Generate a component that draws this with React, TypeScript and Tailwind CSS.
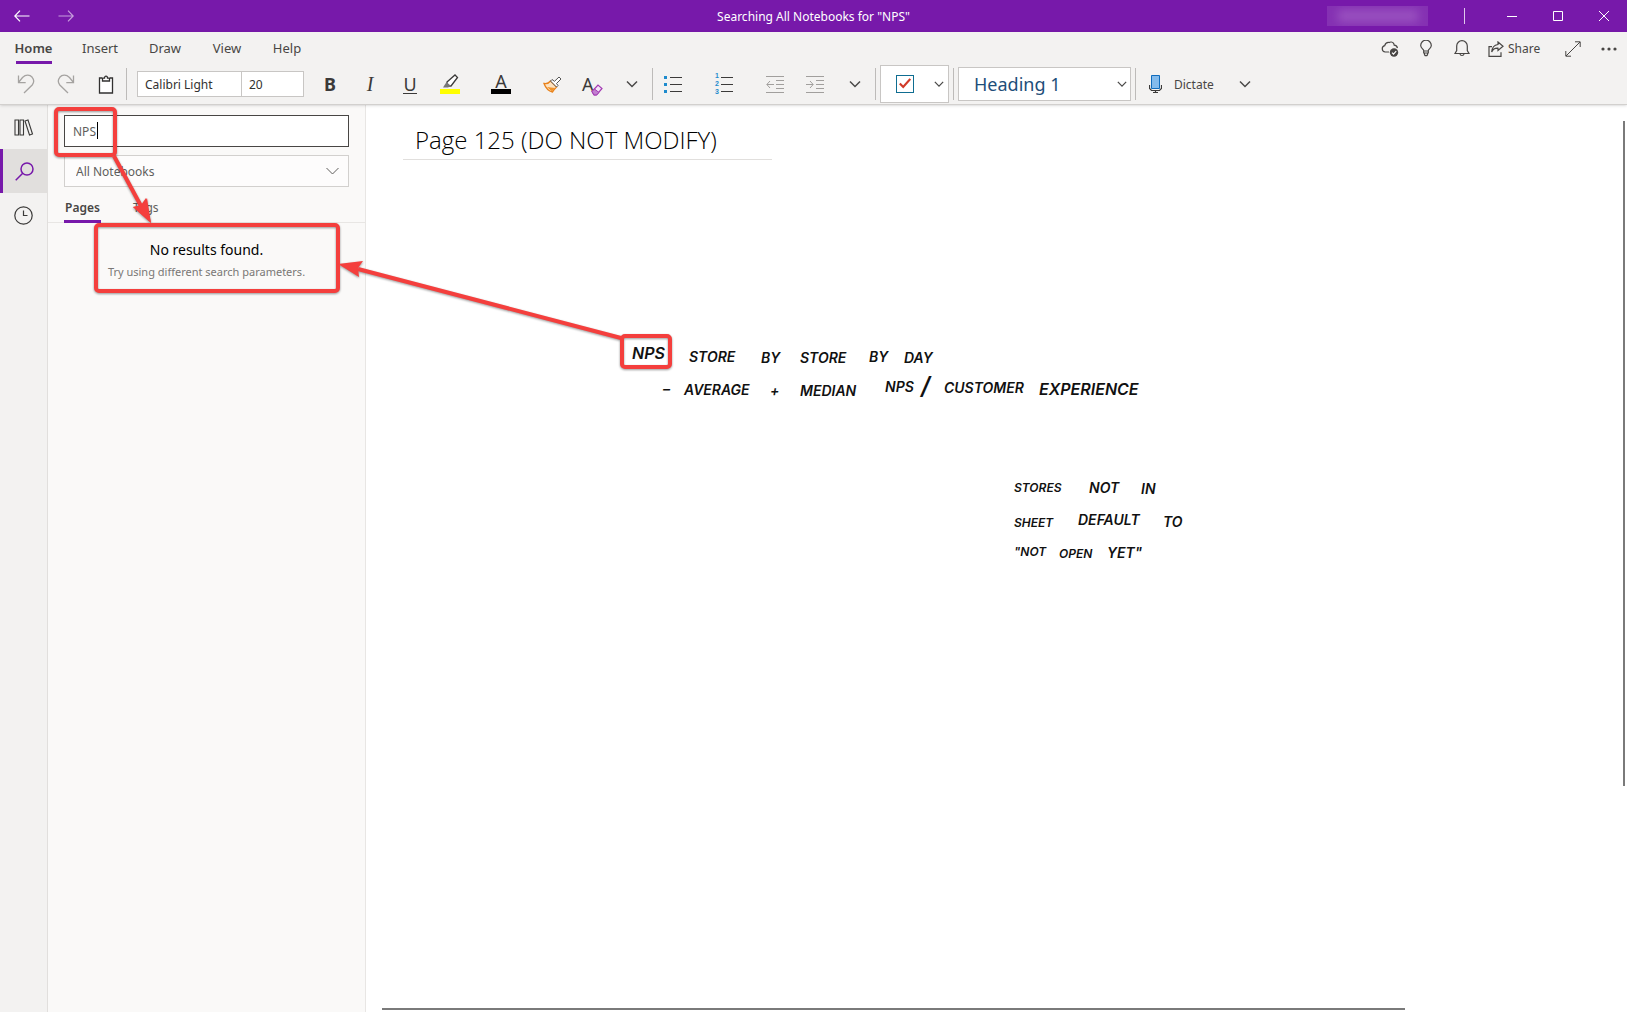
import type { ReactNode } from "react"

const menuTabs = [
  { label: "Insert", width: "w-[66px]" },
  { label: "Draw", width: "w-[64px]" },
  { label: "View", width: "w-[60px]" },
  { label: "Help", width: "w-[60px]" },
]

// Ink words on the page canvas, x / y of the left edge and the vertical centre
const inkWords = [
  { text: "NPS", x: 266, y: 248, size: "text-base" },
  { text: "STORE", x: 323, y: 252, size: "text-sm" },
  { text: "BY", x: 395, y: 253, size: "text-sm" },
  { text: "STORE", x: 434, y: 253, size: "text-sm" },
  { text: "BY", x: 503, y: 252, size: "text-sm" },
  { text: "DAY", x: 538, y: 253, size: "text-sm" },
  { text: "–", x: 297, y: 284, size: "text-sm" },
  { text: "AVERAGE", x: 318, y: 285, size: "text-sm" },
  { text: "+", x: 404, y: 286, size: "text-sm" },
  { text: "MEDIAN", x: 434, y: 286, size: "text-sm" },
  { text: "NPS", x: 519, y: 282, size: "text-sm" },
  { text: "/", x: 555, y: 281, size: "text-2xl" },
  { text: "CUSTOMER", x: 578, y: 283, size: "text-sm" },
  { text: "EXPERIENCE", x: 673, y: 284, size: "text-base" },
  { text: "STORES", x: 648, y: 383, size: "text-xs" },
  { text: "NOT", x: 723, y: 383, size: "text-sm" },
  { text: "IN", x: 775, y: 384, size: "text-sm" },
  { text: "SHEET", x: 648, y: 418, size: "text-xs" },
  { text: "DEFAULT", x: 712, y: 415, size: "text-sm" },
  { text: "TO", x: 797, y: 417, size: "text-sm" },
  { text: "\"NOT", x: 648, y: 447, size: "text-xs" },
  { text: "OPEN", x: 693, y: 449, size: "text-xs" },
  { text: "YET\"", x: 741, y: 448, size: "text-sm" },
]

function ToolButton({ label, wide, children }: { label: string; wide?: boolean; children: ReactNode }) {
  return (
    <button
      aria-label={label}
      className={`flex h-8 shrink-0 items-center justify-center text-[#3b3a39] ${wide ? "w-[62px]" : "w-10"}`}
    >
      {children}
    </button>
  )
}

function Divider() {
  return <div className="h-8 w-px shrink-0 bg-[#bdbbb9]" />
}

function Chevron({ className = "" }: { className?: string }) {
  return (
    <svg width="12" height="12" viewBox="0 0 12 12" fill="none" stroke="#4a4948" strokeWidth="1.5" className={className}>
      <path d="M1 3.5l5 5 5-5" />
    </svg>
  )
}

function TitleBar() {
  return (
    <header className="relative flex h-8 shrink-0 items-center bg-[#7719aa] text-white">
      <button aria-label="Back" className="flex h-8 w-11 items-center justify-center">
        <svg width="16" height="12" viewBox="0 0 16 12" fill="none" stroke="currentColor" strokeWidth="1.2">
          <path d="M15.500 6H1M6 .7L.8 6 6 11.300" />
        </svg>
      </button>
      <button aria-label="Forward" className="flex h-8 w-11 items-center justify-center text-[#c79fdd]">
        <svg width="16" height="12" viewBox="0 0 16 12" fill="none" stroke="currentColor" strokeWidth="1.2">
          <path d="M.5 6H15M10 .7L15.200 6 10 11.300" />
        </svg>
      </button>
      <h1 className="pointer-events-none absolute inset-x-0 pt-px text-center text-xs">Searching All Notebooks for "NPS"</h1>
      <div className="ml-auto flex items-center">
        <div className="mr-9 flex h-5 w-[101px] items-center overflow-hidden bg-[#8531b3]">
          <div className="mx-auto h-3 w-20 bg-[#9a52c0] blur-[5px]" />
        </div>
        <div className="mr-6 h-4 w-px bg-[#e0c8ec]" />
        <button aria-label="Minimize" className="flex h-8 w-[46px] items-center justify-center">
          <svg width="10" height="10" stroke="currentColor"><path d="M0 5.500h10" /></svg>
        </button>
        <button aria-label="Maximize" className="flex h-8 w-[46px] items-center justify-center">
          <svg width="10" height="10" fill="none" stroke="currentColor"><path d="M.5.5h9v9h-9z" /></svg>
        </button>
        <button aria-label="Close" className="flex h-8 w-[46px] items-center justify-center">
          <svg width="10" height="10" stroke="currentColor"><path d="M0 0l10 10M10 0L0 10" /></svg>
        </button>
      </div>
    </header>
  )
}

function MenuRow() {
  return (
    <div className="flex h-8 items-center justify-between pr-2.5 text-[13px] text-[#484644]">
      <nav className="flex h-8">
        <button className="ml-[15px] mr-[15px] flex w-[37px] flex-col items-center justify-between pt-1.5 font-semibold">
          <span className="leading-5">Home</span>
          <span className="h-[3px] w-9 bg-[#7719aa]" />
        </button>
        {menuTabs.map((tab) => (
          <button key={tab.label} className={`h-8 pt-0.5 ${tab.width}`}>{tab.label}</button>
        ))}
      </nav>
      <div className="flex items-center pt-px">
        <button aria-label="Sync status" className="flex w-9 justify-center">
          <svg width="18" height="16" viewBox="0 0 18 16" fill="none" stroke="currentColor" strokeWidth="1.2">
            <path d="M8 11H4.200A3.200 3.200 0 013.700 4.700C4.300 2.500 6.200 1.200 8.200 1.500c1-.8 3.200-.7 4.200.6.5.7.7 1.300.8 2 1.800.1 3 1.200 3.200 3" />
            <circle cx="13" cy="11.500" r="4.200" fill="currentColor" stroke="none" />
            <path d="M11 11.600l1.500 1.500 2.700-3" stroke="#fff" />
          </svg>
        </button>
        <button aria-label="Tell me" className="flex w-9 justify-center">
          <svg width="12" height="17" viewBox="0 0 12 17" fill="none" stroke="currentColor" strokeWidth="1.2">
            <path d="M3.700 13v-2.500C3.500 9 .7 8.200.7 5.500a5.300 5.300 0 0110.600 0c0 2.700-2.800 3.500-3 5V13zM3.700 11h4.600M4.500 13.500v1.200l.7 1h1.600l.7-1v-1.200" />
          </svg>
        </button>
        <button aria-label="Notifications" className="flex w-9 justify-center">
          <svg width="16" height="17" viewBox="0 0 16 17" fill="none" stroke="currentColor" strokeWidth="1.2">
            <path d="M1 13.500h14l-1.700-3V6a5.300 5.300 0 00-10.600 0v4.500zM6 14c.3 2 3.700 2 4 0" />
          </svg>
        </button>
        <button className="ml-2 flex w-[63px] items-center gap-1 text-xs">
          <svg width="16" height="16" viewBox="0 0 16 16" fill="none" stroke="currentColor" strokeWidth="1.200">
            <path d="M4 5.600H1v9.700h12v-4M10 1l5 4.200-5 4.200V7.200C7 7 5 8 3.700 11c.3-4.500 2.300-7 6.300-7.500z" />
          </svg>
          Share
        </button>
        <button aria-label="Full screen" className="flex w-[30px] justify-end">
          <svg width="16" height="16" viewBox="0 0 16 16" fill="none" stroke="currentColor">
            <path d="M1 15L15 1M10 .8h5.200V6M.8 10v5.200H6" />
          </svg>
        </button>
        <button aria-label="More" className="ml-5">
          <svg width="16" height="4" fill="currentColor">
            <circle cx="2" cy="2" r="1.600" /><circle cx="8" cy="2" r="1.600" /><circle cx="14" cy="2" r="1.600" />
          </svg>
        </button>
      </div>
    </div>
  )
}

function Toolbar() {
  return (
    <div className="flex h-10 items-center pl-1.5 text-[13px] text-[#323130]">
      <ToolButton label="Undo">
        <svg width="18" height="20" viewBox="0 0 18 20" fill="none" stroke="#a5a3a1" strokeWidth="1.300">
          <path d="M1.500 1.500v7.200h7.200M1.500 8.500l4-5C9 .2 13 .8 15.200 3.300c2 2.400 1.800 5.300 0 7.700L7 19" />
        </svg>
      </ToolButton>
      <ToolButton label="Redo">
        <svg width="18" height="20" viewBox="0 0 18 20" fill="none" stroke="#a5a3a1" strokeWidth="1.300">
          <path d="M16.500 1.500v7.200H9.300M16.500 8.500l-4-5C9 .2 5 .8 2.800 3.300 .8 5.700 1 8.600 2.800 11l8.200 8" />
        </svg>
      </ToolButton>
      <ToolButton label="Paste">
        <svg width="16" height="19" viewBox="0 0 16 19" fill="none" stroke="#323130" strokeWidth="1.300">
          <path d="M4 3H1.500v15h13V3H12" fill="#fff" />
          <path d="M4.500 6V3.200h2C6.500.4 9.500.4 9.500 3.200h2V6z" fill="#fff" />
        </svg>
      </ToolButton>
      <Divider />
      <div className="ml-2.5 mr-1.5 flex h-[26px] w-[167px] shrink-0 border border-[#c8c6c4] bg-white text-xs">
        <input aria-label="Font" defaultValue="Calibri Light" className="w-[104px] border-r border-[#c8c6c4] pl-[7px] pt-px" />
        <input aria-label="Font size" defaultValue="20" className="min-w-0 flex-1 pl-[7px] pt-px" />
      </div>
      <ToolButton label="Bold"><span className="text-lg font-bold">B</span></ToolButton>
      <ToolButton label="Italic"><span className="font-['Liberation_Serif',serif] text-xl italic">I</span></ToolButton>
      <ToolButton label="Underline">
        <span className="border-b border-[#3b3a39] text-lg leading-[18px]">U</span>
      </ToolButton>
      <ToolButton label="Highlight">
        <svg width="20" height="20" viewBox="0 0 20 20" fill="none" stroke="#3b3a39">
          <path d="M0 15h20v5H0z" fill="#ff0" stroke="none" />
          <path d="M7 8l8-7 2.500 2.500L11 12H7z" fill="#fff" strokeWidth="1.300" />
          <path d="M3 13.500L6.500 8l4.500 4-3 1.500z" fill="#777" stroke="none" />
        </svg>
      </ToolButton>
      <ToolButton label="Font color" wide>
        <span className="flex w-5 flex-col items-center">
          <span className="text-lg leading-[14px]">A</span>
          <span className="mt-px h-[5px] w-5 bg-black" />
        </span>
      </ToolButton>
      <ToolButton label="Format painter">
        <svg width="19" height="17" viewBox="0 0 19 17" fill="none">
          <path d="M1 7.500c3 .5 5-.5 6.500-2.500l6 6c-1.500 1.500-3 3-4 5C5 15 2.500 11.500 1 7.500z" fill="#fde3c1" stroke="#e8811a" strokeWidth="1.300" />
          <path d="M4 11l8 1-3 3.500z" fill="#f0932b" />
          <path d="M7.500 5L9 3.500l2.500 1.800L16 1l2 2-4.500 4.500 1.500 2-1.500 1.500z" fill="#fff" stroke="#555" />
        </svg>
      </ToolButton>
      <ToolButton label="Clear formatting">
        <span className="relative w-5 text-left text-lg leading-5">
          A
          <svg width="12" height="12" viewBox="0 0 12 12" className="absolute -right-px bottom-[-2px]">
            <path d="M1 7.500L7 1l4 3.500L5.500 11H3z" fill="#f3e3f7" stroke="#a33bb3" strokeWidth="1.200" />
            <path d="M1 7.500L3.500 5 8 8.500 5.500 11H3z" fill="#c27fd0" stroke="#a33bb3" />
          </svg>
        </span>
      </ToolButton>
      <ToolButton label="More text options"><Chevron /></ToolButton>
      <Divider />
      <ToolButton label="Bullets">
        <svg width="18" height="17" viewBox="0 0 18 17">
          <path d="M0 0h3v3H0zM0 7h3v3H0zM0 14h3v3H0z" fill="#1e8bcd" />
          <path d="M6 1.500h12M6 8.500h12M6 15.500h12" stroke="#3b3a39" />
        </svg>
      </ToolButton>
      <ToolButton label="Numbering" wide>
        <span className="flex items-center gap-0.5">
          <span className="flex flex-col font-['Liberation_Sans',sans-serif] text-[7px] leading-[8px] font-bold text-[#1e8bcd]">
            <span>1</span><span>2</span><span>3</span>
          </span>
          <svg width="12" height="17" stroke="#3b3a39"><path d="M0 1.500h12M0 8.500h12M0 15.500h12" /></svg>
        </span>
      </ToolButton>
      <ToolButton label="Decrease indent">
        <svg width="18" height="17" fill="none" stroke="#a19f9d">
          <path d="M0 .5h18M10 4.500h8M10 8.500h8M10 12.500h8M0 16.500h18M8 8.500H1M4 5L.8 8.500 4 12" />
        </svg>
      </ToolButton>
      <ToolButton label="Increase indent">
        <svg width="18" height="17" fill="none" stroke="#a19f9d">
          <path d="M0 .5h18M10 4.500h8M10 8.500h8M10 12.500h8M0 16.500h18M0 8.500h7M4 5l3.200 3.500L4 12" />
        </svg>
      </ToolButton>
      <ToolButton label="More paragraph options"><Chevron /></ToolButton>
      <Divider />
      <div className="mx-1 flex h-[38px] w-[69px] shrink-0 items-center justify-between border border-[#c8c6c4] bg-white pl-[15px] pr-1">
        <span className="relative size-[18px]">
          <input type="checkbox" defaultChecked aria-label="To do tag" className="block size-[18px] appearance-none border border-[#0f6d91] bg-white" />
          <svg width="12" height="11" viewBox="0 0 12 11" fill="none" stroke="#d13a28" strokeWidth="2.200" className="pointer-events-none absolute left-[3px] top-[3px]">
            <path d="M.8 5.500L4.200 9 11.300 1" />
          </svg>
        </span>
        <button aria-label="More tags"><Chevron className="size-2.5" /></button>
      </div>
      <Divider />
      <div className="relative mx-1 h-[34px] w-[173px] shrink-0">
        <select aria-label="Style" className="h-full w-full appearance-none border border-[#c8c6c4] bg-white pl-[15px] font-['Noto_Sans',sans-serif] text-lg text-[#1e4e79]">
          <option>Heading 1</option>
        </select>
        <Chevron className="pointer-events-none absolute right-1 top-3 size-2.5" />
      </div>
      <Divider />
      <button className="ml-[13px] flex items-center gap-3 text-xs text-[#484644]">
        <svg width="13" height="18" viewBox="0 0 13 18" fill="none" stroke="#3b3a39">
          <path d="M.5 10v3.500l2 2h8l2-2V10M6.500 15.500V17M4 17.500h5" strokeWidth="1.200" />
          <path d="M2.500.5h8v13h-8z" fill="#83bbec" stroke="#0f6cbd" />
        </svg>
        <span className="pt-0.5">Dictate</span>
      </button>
      <button aria-label="Dictate options" className="ml-[25px]"><Chevron /></button>
    </div>
  )
}

function Rail() {
  return (
    <nav className="flex w-12 shrink-0 flex-col border-r border-[#e1dfdd] bg-[#f3f2f1]">
      <button aria-label="Notebooks" className="flex h-11 items-center justify-center">
        <svg width="20" height="17" viewBox="0 0 20 17" fill="none" stroke="#3b3a39" strokeWidth="1.100">
          <path d="M1 1h3.500v15H1zM6 1h3.500v15H6zM11 2l3-1 4.500 14-3 1z" />
        </svg>
      </button>
      <button aria-label="Search" className="flex h-11 items-center justify-center border-l-3 border-[#7719aa] bg-[#e1dfdd] pr-0.5">
        <svg width="19" height="19" viewBox="0 0 19 19" fill="none" stroke="#7719aa" strokeWidth="1.500">
          <circle cx="12" cy="7" r="6" />
          <path d="M7.700 11.300L.7 18.300" />
        </svg>
      </button>
      <button aria-label="Recent notes" className="flex h-11 items-center justify-center">
        <svg width="19" height="19" viewBox="0 0 19 19" fill="none" stroke="#3b3a39" strokeWidth="1.200">
          <circle cx="9.500" cy="9.500" r="8.700" />
          <path d="M9.500 4.500v5h4" />
        </svg>
      </button>
    </nav>
  )
}

function SearchPanel() {
  return (
    <aside className="w-[318px] shrink-0 border-r border-[#e8e6e4] bg-[#faf9f8] pt-2.5 text-[13px] text-[#605e5c]">
      <div className="mx-4 flex flex-col gap-2">
        <div className="relative h-8">
          <input aria-label="Search" defaultValue="NPS" className="h-8 w-full border border-[#484644] bg-white pl-2 text-xs" />
          <span className="absolute left-[33px] top-[7px] h-[17px] w-px bg-black" />
        </div>
        <div className="relative h-8">
          <select aria-label="Search in" className="h-8 w-full appearance-none border border-[#d2d0ce] bg-[#fdfcfc] pl-[11px] pt-0.5 text-xs">
            <option>All Notebooks</option>
          </select>
          <svg width="13" height="8" fill="none" stroke="#605e5c" className="pointer-events-none absolute right-2.5 top-3">
            <path d="M.5 1l6 6 6-6" />
          </svg>
        </div>
      </div>
      <div className="mt-2.5 flex h-[26px] border-b border-[#e8e6e4] pl-4 text-xs">
        <button className="h-[26px] w-[37px] border-b-3 border-[#7719aa] pb-0.5 font-semibold text-[#484644]">Pages</button>
        <button className="ml-8 h-[23px] pb-0.5">Tags</button>
      </div>
      <div className="mt-[17px] text-center">
        <p className="text-sm leading-5 text-black">No results found.</p>
        <p className="mt-1 text-[11px] leading-4 text-[#797775]">Try using different search parameters.</p>
      </div>
    </aside>
  )
}

function PageCanvas() {
  return (
    <main className="relative min-w-0 flex-1 overflow-hidden bg-white">
      <h2 className="ml-[37px] mt-4 h-[39px] w-[369px] border-b border-[#e1dfdd] pl-3 font-['Open_Sans',sans-serif] text-2xl leading-[38px] font-light text-black">
        Page 125 (DO NOT MODIFY)
      </h2>
      {inkWords.map((word) => (
        <span
          key={`${word.x}-${word.y}`}
          className={`absolute -translate-y-1/2 font-['Inter',sans-serif] leading-none font-semibold text-[#111] italic ${word.size}`}
          style={{ left: word.x, top: word.y }}
        >
          {word.text}
        </span>
      ))}
      <div className="absolute right-0.5 top-4 h-[665px] w-0.5 bg-[#7a7a7a]" />
      <div className="absolute bottom-0.5 left-4 h-0.5 w-[1023px] bg-[#7a7a7a]" />
    </main>
  )
}

// Red callouts pointing from the ink to the empty search results
function Callouts() {
  return (
    <svg width="700" height="400" fill="none" stroke="#f43f3d" strokeWidth="4" className="pointer-events-none absolute left-0 top-0 z-20 drop-shadow-[0_1px_1px_rgba(0,0,0,0.4)]">
      <rect x="56" y="109" width="59" height="46" rx="3" />
      <rect x="96" y="225" width="242" height="66" rx="3" />
      <rect x="622" y="336" width="48" height="31" rx="3" />
      <path d="M114 156l27 50M621 338L358 269" />
      <path d="M151 223l-18-16 8-2 5-7zM338 264l25-3-5 7 1 9z" fill="#f43f3d" stroke="none" />
      <path d="M151 223l-18-16 9-1 5-8z" fill="#f43f3d" stroke="none" />
    </svg>
  )
}

export default function App() {
  return (
    <div className="relative flex h-screen flex-col overflow-hidden bg-white font-['Noto_Sans',sans-serif]">
      <TitleBar />
      <div className="relative z-10 h-[73px] shrink-0 border-b border-[#d2d0ce] bg-[#f3f2f1] shadow-sm">
        <MenuRow />
        <Toolbar />
      </div>
      <div className="flex min-h-0 flex-1">
        <Rail />
        <SearchPanel />
        <PageCanvas />
      </div>
      <Callouts />
    </div>
  )
}
